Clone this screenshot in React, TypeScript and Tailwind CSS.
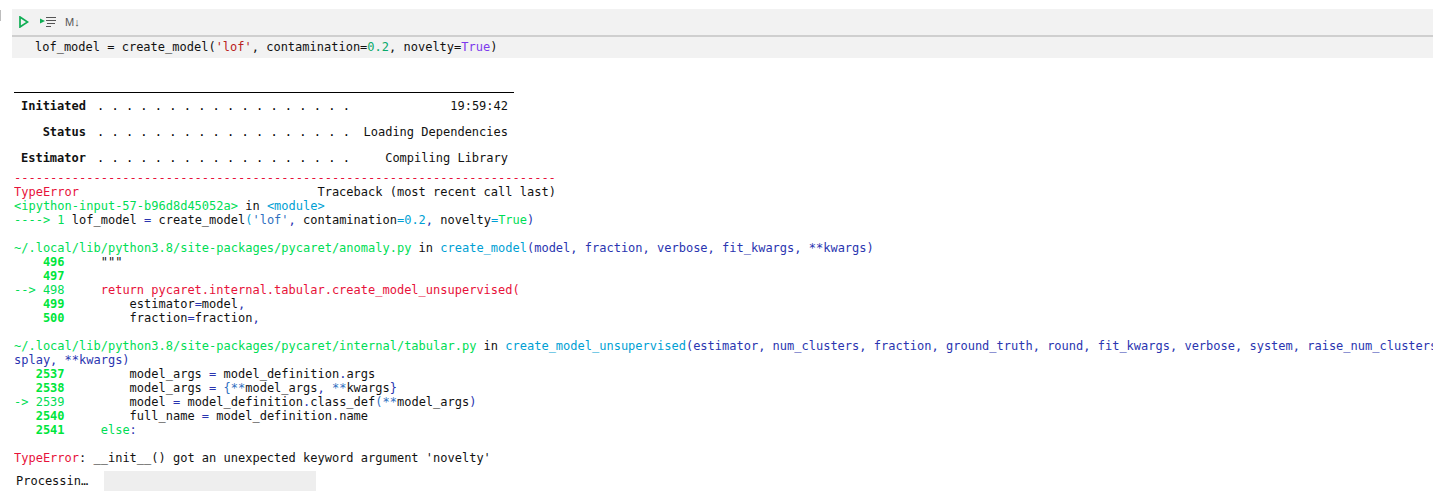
const green = 'text-[#00dd55]';
const greenBold = 'font-bold text-[#00e63c]';
const red = 'text-[#e7123a]';
const cyan = 'text-[#009fd4]';
const blue = 'text-[#2f6fc0]';
const navy = 'text-[#2a35b0]';
const op = 'text-[#2a35b0]';
const ink = 'text-[#111111]';

type Seg = [string, string];

function Line({ segs }: { segs: Seg[] }) {
	return (
		<div className="h-[14px] whitespace-pre overflow-hidden">
			{segs.map(([cls, text], i) => (
				<span key={i} className={cls}>
					{text}
				</span>
			))}
		</div>
	);
}

const traceback: Seg[][] = [
	[[red, '-'.repeat(75)]],
	[[red, 'TypeError'], [ink, '                                 Traceback (most recent call last)']],
	[[green, '<ipython-input-57-b96d8d45052a>'], [ink, ' in '], [cyan, '<module>']],
	[
		[green, '----> 1 '],
		[ink, 'lof_model '],
		[op, '='],
		[ink, ' create_model'],
		[cyan, '('],
		[blue, "'lof'"],
		[navy, ', '],
		[ink, 'contamination'],
		[cyan, '='],
		[cyan, '0.2'],
		[navy, ', '],
		[ink, 'novelty'],
		[cyan, '='],
		[green, 'True'],
		[navy, ')'],
	],
	[],
	[
		[green, '~/.local/lib/python3.8/site-packages/pycaret/anomaly.py'],
		[ink, ' in '],
		[cyan, 'create_model'],
		[navy, '(model, fraction, verbose, fit_kwargs, **kwargs)'],
	],
	[[greenBold, '    496'], [ink, '     """']],
	[[greenBold, '    497']],
	[[green, '--> 498'], [red, '     return pycaret.internal.tabular.create_model_unsupervised(']],
	[[greenBold, '    499'], [ink, '         estimator'], [op, '='], [ink, 'model'], [navy, ',']],
	[[greenBold, '    500'], [ink, '         fraction'], [op, '='], [ink, 'fraction'], [navy, ',']],
	[],
	[
		[green, '~/.local/lib/python3.8/site-packages/pycaret/internal/tabular.py'],
		[ink, ' in '],
		[cyan, 'create_model_unsupervised'],
		[navy, '(estimator, num_clusters, fraction, ground_truth, round, fit_kwargs, verbose, system, raise_num_clusters'],
	],
	[[navy, 'splay, **kwargs)']],
	[[greenBold, '   2537'], [ink, '         model_args '], [op, '='], [ink, ' model_definition'], [navy, '.'], [ink, 'args']],
	[
		[greenBold, '   2538'],
		[ink, '         model_args '],
		[op, '='],
		[blue, ' {**'],
		[ink, 'model_args'],
		[navy, ', '],
		[blue, '**'],
		[ink, 'kwargs'],
		[navy, '}'],
	],
	[
		[green, '-> 2539'],
		[ink, '         model '],
		[op, '='],
		[ink, ' model_definition'],
		[navy, '.'],
		[ink, 'class_def'],
		[blue, '(**'],
		[ink, 'model_args'],
		[navy, ')'],
	],
	[[greenBold, '   2540'], [ink, '         full_name '], [op, '='], [ink, ' model_definition'], [navy, '.'], [ink, 'name']],
	[[greenBold, '   2541'], [green, '     else'], [navy, ':']],
	[],
	[[red, 'TypeError'], [ink, ": __init__() got an unexpected keyword argument 'novelty'"]],
];

const rows = [
	['Initiated', '19:59:42'],
	['Status', 'Loading Dependencies'],
	['Estimator', 'Compiling Library'],
];

function RunIcon() {
	return (
		<svg width="10" height="12" viewBox="0 0 10 12" fill="none" stroke="#0fae54" strokeWidth="1.7">
			<path d="M1 1 L8.6 6 L1 11 Z" />
		</svg>
	);
}

function RunAllIcon() {
	return (
		<svg width="16" height="12" viewBox="0 0 16 12" fill="none">
			<path d="M0 2.5 L5 5 L0 7.5 Z" fill="#0fae54" />
			<path d="M6 1.5H16M6 4.5H16M7 7.5H15M6 10.5H11" stroke="#555555" strokeWidth="1" />
		</svg>
	);
}

export default function App() {
	return (
		<div className="relative h-[503px] w-[1433px] overflow-hidden bg-white font-['DejaVu_Sans_Mono',monospace] text-[12px] leading-[14px] text-[#111111]">
			<div className="absolute left-0 top-[10px] h-[11px] w-[1px] bg-[#bdbdbd]" />
			<div className="ml-3 pt-[9px]">
				<div className="flex h-[28px] items-center border-b-2 border-[#cfcfcf] bg-[#f2f2f2] pl-[7px]">
					<RunIcon />
					<div className="ml-[11px]">
						<RunAllIcon />
					</div>
					<span className="ml-[9px] font-['Liberation_Sans',sans-serif] text-[11px] text-[#555555]">M↓</span>
				</div>
				<div className="h-[21px] whitespace-pre bg-[#f2f2f2] pl-[23px] pt-[3px]">
					lof_model = create_model(<span className="text-[#ba2121]">'lof'</span>, contamination=
					<span className="text-[#08a96b]">0.2</span>, novelty=
					<span className="text-[#7c3aed]">True</span>)
				</div>
			</div>

			<div className="ml-[14px] mt-[34px] w-[500px] border-t border-black">
				{rows.map(([label, value]) => (
					<div key={label} className="flex h-[26px] items-center whitespace-pre">
						<span className="w-[72px] text-right font-bold">{label}</span>
						<span className="ml-[11px] text-black">{Array(18).fill('.').join(' ')}</span>
						<span className="flex-1 pr-[6px] text-right">{value}</span>
					</div>
				))}
			</div>

			<div className="ml-[14px]">
				{traceback.map((segs, i) => (
					<Line key={i} segs={segs} />
				))}
			</div>

			<div className="ml-4 mt-[6px] flex h-[20px] items-center">
				<span className="w-[88px]">Processin…</span>
				<div className="h-[20px] w-[212px] bg-[#eeeeee]" />
			</div>
		</div>
	);
}
